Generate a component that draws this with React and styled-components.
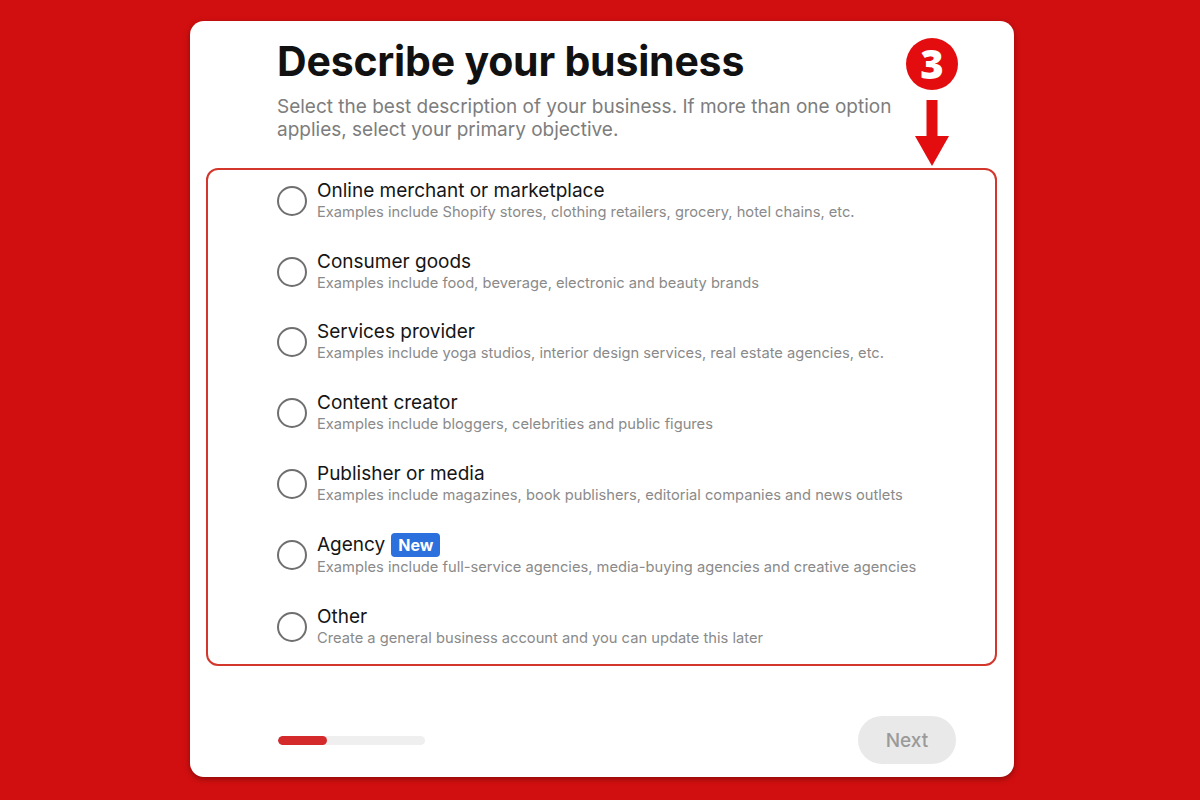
import React from "react";
import styled, { createGlobalStyle } from "styled-components";

const GlobalStyle = createGlobalStyle`
  html, body {
    margin: 0;
    padding: 0;
    background: #d20f10;
    font-family: Inter, "Helvetica Neue", Arial, sans-serif;
  }
`;

const Page = styled.div`
  width: 1200px;
  height: 800px;
  padding: 21px 0 0 190px;
  box-sizing: border-box;
  position: relative;
`;

const Card = styled.div`
  width: 824px;
  height: 756px;
  background: #fff;
  border-radius: 14px;
  box-shadow: 0 2px 6px rgba(0, 0, 0, 0.35);
  box-sizing: border-box;
  padding: 16px 58px 13px 0;
  display: flex;
  flex-direction: column;
`;

const Header = styled.div`
  padding-left: 87px;
`;

const Title = styled.h1`
  margin: 0;
  font-size: 41px;
  line-height: 48px;
  font-weight: 700;
  color: #111;
  letter-spacing: -0.2px;
`;

const Subtitle = styled.p`
  margin: 10px 0 0;
  font-size: 19px;
  line-height: 23px;
  color: #7d7d7d;
  max-width: 620px;
`;

const OptionBox = styled.div`
  margin: 27px -41px 0 16px;
  border: 2px solid #d3372c;
  border-radius: 12px;
  padding: 10px 0 16px 69px;
  display: flex;
  flex-direction: column;
  gap: 28.7px;
`;

const Option = styled.label`
  display: flex;
  align-items: center;
  gap: 10px;
  cursor: pointer;
`;

const Radio = styled.span`
  width: 26px;
  height: 26px;
  border-radius: 50%;
  border: 2px solid #6f6f6f;
  flex-shrink: 0;
`;

const OptionText = styled.div`
  display: flex;
  flex-direction: column;
`;

const OptionTitle = styled.div`
  display: flex;
  align-items: center;
  gap: 6px;
  font-size: 19px;
  line-height: 22px;
  color: #151515;
`;

const OptionDesc = styled.div`
  font-size: 14.7px;
  line-height: 20px;
  color: #8a8a8a;
`;

const Badge = styled.span`
  background: #2b70dc;
  color: #fff;
  font-weight: 700;
  font-size: 16px;
  line-height: 24px;
  padding: 0 7px;
  border-radius: 4px;
`;

const Footer = styled.div`
  margin-top: auto;
  padding-left: 88px;
  display: flex;
  align-items: center;
  justify-content: space-between;
`;

const Progress = styled.div`
  width: 147px;
  height: 9px;
  border-radius: 5px;
  background: #efefef;
  overflow: hidden;
`;

const ProgressFill = styled.div`
  height: 100%;
  border-radius: 5px;
  background: #d42a2c;
`;

const NextButton = styled.button`
  width: 98px;
  height: 48px;
  border: none;
  border-radius: 24px;
  background: #e9e9e9;
  color: #9a9a9a;
  font-family: inherit;
  font-size: 19px;
  font-weight: 500;
`;

const StepMarker = styled.div`
  position: absolute;
  left: 906px;
  top: 38px;
  display: flex;
  flex-direction: column;
  align-items: center;
  width: 52px;
`;

const StepCircle = styled.div`
  width: 52px;
  height: 52px;
  border-radius: 50%;
  background: #e30d0f;
  color: #fff;
  font-family: "Open Sans", Inter, sans-serif;
  font-weight: 800;
  font-size: 40px;
  line-height: 52px;
  text-align: center;
  box-shadow: 0 0 0 2px #fff;
`;

const options = [
  { title: "Online merchant or marketplace", desc: "Examples include Shopify stores, clothing retailers, grocery, hotel chains, etc." },
  { title: "Consumer goods", desc: "Examples include food, beverage, electronic and beauty brands" },
  { title: "Services provider", desc: "Examples include yoga studios, interior design services, real estate agencies, etc." },
  { title: "Content creator", desc: "Examples include bloggers, celebrities and public figures" },
  { title: "Publisher or media", desc: "Examples include magazines, book publishers, editorial companies and news outlets" },
  { title: "Agency", badge: "New", desc: "Examples include full-service agencies, media-buying agencies and creative agencies" },
  { title: "Other", desc: "Create a general business account and you can update this later" },
];

export default function App() {
  const progress = 33;
  return (
    <>
      <GlobalStyle />
      <Page>
        <Card>
          <Header>
            <Title>Describe your business</Title>
            <Subtitle>
              Select the best description of your business. If more than one option
              applies, select your primary objective.
            </Subtitle>
          </Header>
          <OptionBox>
            {options.map((o) => (
              <Option key={o.title}>
                <Radio />
                <OptionText>
                  <OptionTitle>
                    {o.title}
                    {o.badge && <Badge>{o.badge}</Badge>}
                  </OptionTitle>
                  <OptionDesc>{o.desc}</OptionDesc>
                </OptionText>
              </Option>
            ))}
          </OptionBox>
          <Footer>
            <Progress>
              <ProgressFill style={{ width: `${progress}%` }} />
            </Progress>
            <NextButton>Next</NextButton>
          </Footer>
        </Card>
        <StepMarker>
          <StepCircle>3</StepCircle>
          <svg width="36" height="68" viewBox="0 0 36 68" style={{ marginTop: 10 }}>
            <rect x="12.5" y="0" width="11" height="38" fill="#e30d0f" />
            <polygon points="1,36 35,36 18,66" fill="#e30d0f" />
          </svg>
        </StepMarker>
      </Page>
    </>
  );
}
